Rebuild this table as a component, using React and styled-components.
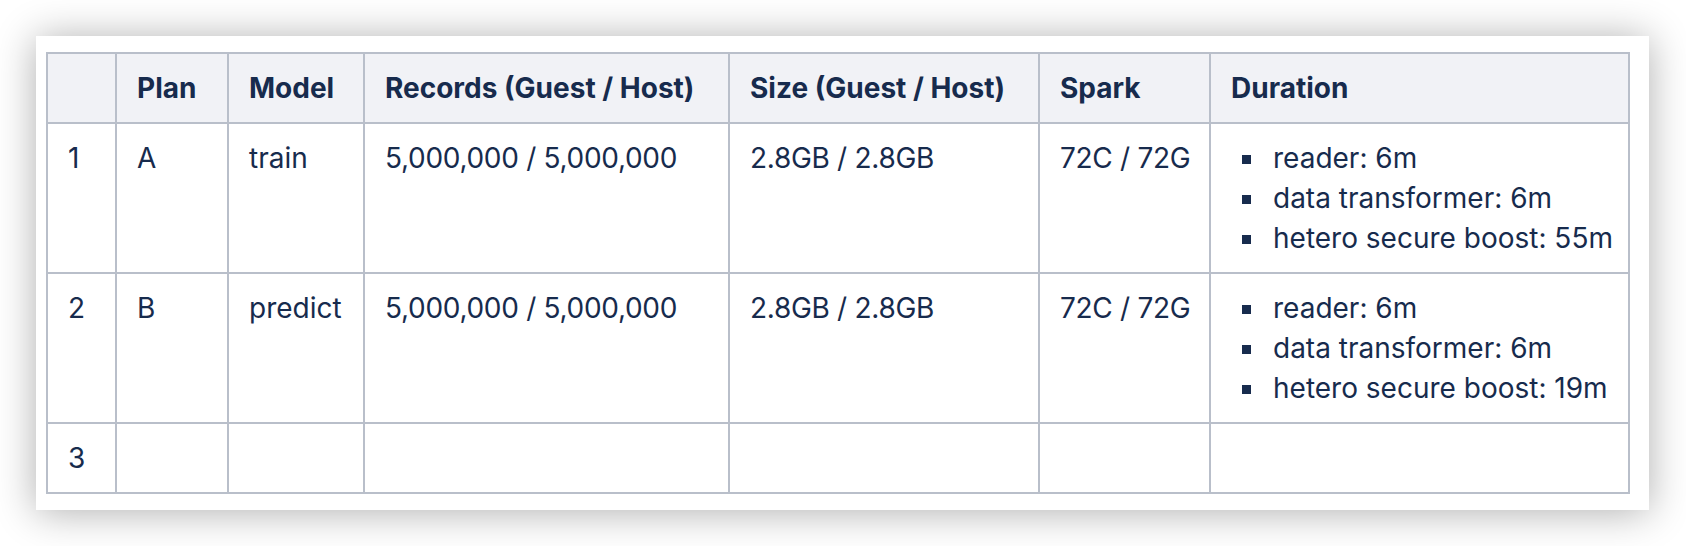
import React from 'react';
import styled, { createGlobalStyle } from 'styled-components';

const GlobalStyle = createGlobalStyle`
    html, body {
        margin: 0;
        padding: 0;
        background: #ffffff;
    }
    body {
        font-family: 'Inter', 'Noto Sans', 'Liberation Sans', sans-serif;
        color: #172b4d;
    }
`

const columns = [
    { title: '', width: 69 },
    { title: 'Plan', width: 112 },
    { title: 'Model', width: 136 },
    { title: 'Records (Guest / Host)', width: 365 },
    { title: 'Size (Guest / Host)', width: 310 },
    { title: 'Spark', width: 171 },
    { title: 'Duration', width: 419 },
]

const rows = [
    {
        id: 1, plan: 'A', model: 'train', records: '5,000,000 / 5,000,000', size: '2.8GB / 2.8GB', spark: '72C / 72G',
        duration: ['reader: 6m', 'data transformer: 6m', 'hetero secure boost: 55m']
    },
    {
        id: 2, plan: 'B', model: 'predict', records: '5,000,000 / 5,000,000', size: '2.8GB / 2.8GB', spark: '72C / 72G',
        duration: ['reader: 6m', 'data transformer: 6m', 'hetero secure boost: 19m']
    },
    { id: 3 },
]

const App = () => {
    return (
        <>
            <GlobalStyle />
            <Page>
                <Card>
                    <Table>
                        <colgroup>
                            {columns.map((col, index) => <col key={index} style={{ width: col.width }} />)}
                        </colgroup>
                        <thead>
                            <tr>
                                {columns.map((col, index) => <Th key={index}>{col.title}</Th>)}
                            </tr>
                        </thead>
                        <tbody>
                            {
                                rows.map((row) => (
                                    <tr key={row.id}>
                                        <Td>{row.id}</Td>
                                        <Td>{row.plan}</Td>
                                        <Td>{row.model}</Td>
                                        <Td $tight>{row.records}</Td>
                                        <Td $tight>{row.size}</Td>
                                        <Td $tight>{row.spark}</Td>
                                        <Td>
                                            {
                                                row.duration &&
                                                <List>
                                                    {row.duration.map((item, index) => (
                                                        <Item key={index}>
                                                            <Bullet />
                                                            <span>{item}</span>
                                                        </Item>
                                                    ))}
                                                </List>
                                            }
                                        </Td>
                                    </tr>
                                ))
                            }
                        </tbody>
                    </Table>
                </Card>
            </Page>
        </>
    );
}

export default App;

const Page = styled.div`
    width: 1686px;
    height: 546px;
    padding: 36px 0 0 36px;
    box-sizing: border-box;
    overflow: hidden;
`

const Card = styled.div`
    width: 1613px;
    box-sizing: border-box;
    padding: 16px 20px 16px 10px;
    background: #ffffff;
    box-shadow: 0 2px 38px rgba(0, 0, 0, 0.32);
`

const Table = styled.table`
    border-collapse: collapse;
    table-layout: fixed;
    width: 1584px;
    font-size: 28px;
    line-height: 40px;
    color: #172b4d;
`

const Th = styled.th`
    background: #f1f2f6;
    border: 2px solid #b9bfca;
    padding: 14px 20px;
    text-align: left;
    font-weight: 700;
    white-space: nowrap;
`

const Td = styled.td`
    border: 2px solid #b9bfca;
    padding: 14px 20px;
    height: 40px;
    vertical-align: top;
    white-space: nowrap;
    font-weight: 400;
    letter-spacing: ${props => props.$tight ? '-0.3px' : '0'};
`

const List = styled.ul`
    list-style: none;
    margin: 0;
    padding: 0 0 0 11px;
`

const Item = styled.li`
    display: flex;
    align-items: center;
    gap: 22px;
    height: 40px;
`

const Bullet = styled.i`
    display: block;
    flex-shrink: 0;
    width: 9px;
    height: 9px;
    background: #172b4d;
    margin-top: 2px;
`
